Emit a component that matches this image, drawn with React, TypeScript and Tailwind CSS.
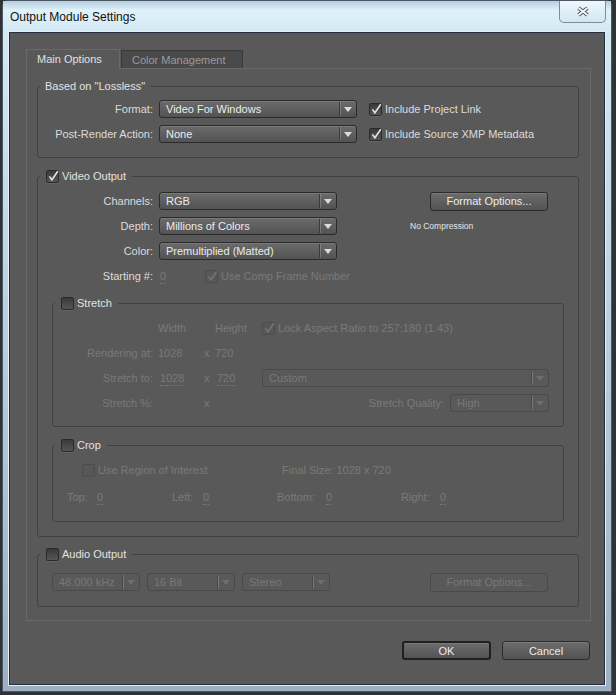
import React from 'react';

// shared bits of the dark dialog
const LABEL = 'text-[#dcdcdc]';
const DIM = 'text-[#7a7a7a]';

function Check({ checked = false, disabled = false, className = '' }: { checked?: boolean; disabled?: boolean; className?: string }) {
  return (
    <span
      className={`relative inline-block w-[13px] h-[13px] shrink-0 rounded-[2px] border ${
        disabled
          ? 'border-[#4c4c4c] bg-[#575757]'
          : 'border-[#2a2a2a] bg-linear-to-b from-[#3a3a3a] to-[#565656] shadow-[0_1px_0_rgba(255,255,255,0.08)]'
      } ${className}`}
    >
      {checked && (
        <svg className="absolute -top-[1px] left-[0px]" width="13" height="13" viewBox="0 0 13 13">
          <path d="M2.4 6.4 L4.9 9.8 L10.8 1.2" fill="none" stroke={disabled ? '#747474' : '#e2e2e2'} strokeWidth="1.6" />
        </svg>
      )}
    </span>
  );
}

function Select({ value, disabled = false, className = '' }: { value: string; disabled?: boolean; className?: string }) {
  return (
    <div
      className={`flex items-center h-[18px] shrink-0 rounded-[3px] border ${
        disabled
          ? 'border-[#494949] text-[#787878]'
          : 'border-[#2b2b2b] bg-linear-to-b from-[#6b6b6b] to-[#535353] text-[#ececec] shadow-[inset_0_1px_0_rgba(255,255,255,0.1)]'
      } ${className}`}
    >
      <span className="flex-1 pl-[6px] truncate leading-[16px]">{value}</span>
      <span className={`w-px h-[14px] ${disabled ? 'bg-[#494949]' : 'bg-[#3a3a3a]'} shadow-[1px_0_0_rgba(255,255,255,0.18)]`} />
      <span className="w-[16px] flex items-center justify-center">
        <svg width="8" height="5" viewBox="0 0 8 5">
          <path d="M0 0 H8 L4 5 Z" fill={disabled ? '#6e6e6e' : '#dcdcdc'} />
        </svg>
      </span>
    </div>
  );
}

function Btn({ label, disabled = false, isDefault = false, className = '' }: { label: string; disabled?: boolean; isDefault?: boolean; className?: string }) {
  return (
    <div
      className={`flex items-center justify-center h-[19px] shrink-0 rounded-[3px] ${
        disabled
          ? 'border border-[#494949] text-[#787878]'
          : `${isDefault ? 'border-2 border-[#1f1f1f]' : 'border border-[#2b2b2b]'} bg-linear-to-b from-[#6c6c6c] to-[#535353] text-[#ececec] shadow-[inset_0_1px_0_rgba(255,255,255,0.1)]`
      } ${className}`}
    >
      {label}
    </div>
  );
}

// editable number shown as dotted-underlined text
function Num({ v }: { v: string }) {
  return <span className={`${DIM} border-b border-dotted border-[#7a7a7a]`}>{v}</span>;
}

export default function App() {
  return (
    <div className="w-[616px] h-[695px] bg-[#303336] pl-[2px] overflow-hidden font-['Liberation_Sans',Arial,sans-serif] text-[11px] leading-[14px] select-none">
      {/* Window frame */}
      <div className="flex flex-col w-[610px] h-[692px] rounded-t-[6px] border border-[#4b5864] bg-linear-to-b from-[#d6ebf6] to-[#9cb0c1]">
        {/* Title bar */}
        <div className="flex items-start justify-between h-[31px] bg-linear-to-b from-[#b4cde0] via-[#e0f2fa] via-30% to-[#d3e9f4]">
          <span className="pl-[7px] self-center text-[12px] text-[#111]">Output Module Settings</span>
          <div className="mr-[5px] w-[47px] h-[22px] rounded-b-[5px] border border-t-0 border-[#7b8c9a] bg-linear-to-b from-[#eef8fc] to-[#d3e7f2] flex items-center justify-center">
            <svg width="14" height="11" viewBox="0 0 14 11">
              <path d="M2.5 2 L11.5 9 M11.5 2 L2.5 9" stroke="#50565c" strokeWidth="3.8" />
              <path d="M2.5 2 L11.5 9 M11.5 2 L2.5 9" stroke="#f6f8fa" strokeWidth="1.8" />
            </svg>
          </div>
        </div>

        {/* Client area */}
        <div className="mx-[6px] mb-[6px] flex-1 flex flex-col border border-[#25303a] bg-[#595959] shadow-[0_0_0_1px_#e2eef6]">
          {/* Tabs */}
          <div className="flex items-end ml-[16px] mt-[16px] h-[20px] -mb-px relative z-10">
            <div className="w-[94px] h-[20px] border border-b-0 border-[#6a6a6a] bg-[#595959] pl-[10px] leading-[19px] text-[#e0e0e0]">
              Main Options
            </div>
            <div className="ml-[1px] w-[122px] h-[19px] border border-[#3a3a3a] border-b-[#6a6a6a] bg-[#4a4a4a] pl-[10px] leading-[18px] text-[#9a9a9a]">
              Color Management
            </div>
          </div>

          {/* Tab panel */}
          <div className="ml-[16px] w-[565px] border border-[#6a6a6a] pl-[10px] pr-[11px] pt-[10px] pb-[13px]">
            {/* Based on "Lossless" */}
            <fieldset className="border border-[#424242] rounded-[3px] pt-[7px] pb-[14px] min-w-0">
              <legend className="ml-[2px] px-[5px] h-[14px] leading-[14px] text-[#e2e2e2]">Based on "Lossless"</legend>
              <div className="flex flex-col gap-[7px]">
                <div className="flex items-center h-[18px]">
                  <span className={`w-[115px] text-right ${LABEL}`}>Format:</span>
                  <Select value="Video For Windows" className="ml-[6px] w-[198px]" />
                  <Check checked className="ml-[12px]" />
                  <span className={`ml-[3px] ${LABEL}`}>Include Project Link</span>
                </div>
                <div className="flex items-center h-[18px]">
                  <span className={`w-[115px] text-right ${LABEL}`}>Post-Render Action:</span>
                  <Select value="None" className="ml-[6px] w-[198px]" />
                  <Check checked className="ml-[12px]" />
                  <span className={`ml-[3px] ${LABEL}`}>Include Source XMP Metadata</span>
                </div>
              </div>
            </fieldset>

            {/* Video Output */}
            <fieldset className="mt-[11px] border border-[#424242] rounded-[3px] pt-[9px] pb-[14px] min-w-0">
              <legend className="ml-[2px] px-[6px] h-[14px]">
                <span className="flex items-center gap-[3px] h-[14px] leading-[14px] text-[#e2e2e2]">
                  <Check checked />
                  Video Output
                </span>
              </legend>
              <div className="flex flex-col gap-[7px]">
                <div className="flex items-center h-[18px]">
                  <span className={`w-[115px] text-right ${LABEL}`}>Channels:</span>
                  <Select value="RGB" className="ml-[6px] w-[178px]" />
                  <Btn label="Format Options..." className="ml-[93px] w-[118px]" />
                </div>
                <div className="flex items-center h-[18px]">
                  <span className={`w-[115px] text-right ${LABEL}`}>Depth:</span>
                  <Select value="Millions of Colors" className="ml-[6px] w-[178px]" />
                  <span className="ml-[73px] text-[8.5px] text-[#e6e6e6]">No Compression</span>
                </div>
                <div className="flex items-center h-[18px]">
                  <span className={`w-[115px] text-right ${LABEL}`}>Color:</span>
                  <Select value="Premultiplied (Matted)" className="ml-[6px] w-[178px]" />
                </div>
                <div className="flex items-center h-[18px]">
                  <span className={`w-[115px] text-right ${LABEL}`}>Starting #:</span>
                  <span className="ml-[7px] w-[10px] flex">
                    <Num v="0" />
                  </span>
                  <Check checked disabled className="ml-[35px]" />
                  <span className={`ml-[3px] ${DIM}`}>Use Comp Frame Number</span>
                </div>
              </div>

              {/* Stretch */}
              <fieldset className="mt-[11px] mx-[14px] border border-[#424242] rounded-[3px] pt-[9px] pb-[14px] min-w-0">
                <legend className="ml-[2px] px-[6px] h-[14px]">
                  <span className="flex items-center gap-[3px] h-[14px] leading-[14px] text-[#e2e2e2]">
                    <Check />
                    Stretch
                  </span>
                </legend>
                <div className={`flex flex-col gap-[7px] ${DIM}`}>
                  <div className="flex items-center h-[18px]">
                    <span className="w-[105px]" />
                    <span className="w-[57px]">Width</span>
                    <span className="w-[47px]">Height</span>
                    <Check checked disabled />
                    <span className="ml-[3px]">Lock Aspect Ratio to 257:180 (1.43)</span>
                  </div>
                  <div className="flex items-center h-[18px]">
                    <span className="w-[100px] text-right">Rendering at:</span>
                    <span className="ml-[5px] w-[46px]">1028</span>
                    <span className="w-[11px]">x</span>
                    <span className="w-[47px]">720</span>
                  </div>
                  <div className="flex items-center h-[18px]">
                    <span className="w-[100px] text-right">Stretch to:</span>
                    <span className="ml-[7px] w-[44px] flex">
                      <Num v="1028" />
                    </span>
                    <span className="w-[13px]">x</span>
                    <span className="w-[45px] flex">
                      <Num v="720" />
                    </span>
                    <Select value="Custom" disabled className="w-[287px]" />
                  </div>
                  <div className="flex items-center h-[18px]">
                    <span className="w-[100px] text-right">Stretch %:</span>
                    <span className="ml-[5px] w-[46px]" />
                    <span className="w-[11px]">x</span>
                    <span className="w-[47px]" />
                    <span className="w-[182px] text-right">Stretch Quality:</span>
                    <Select value="High" disabled className="ml-[6px] w-[99px]" />
                  </div>
                </div>
              </fieldset>

              {/* Crop */}
              <fieldset className="mt-[11px] mx-[14px] border border-[#424242] rounded-[3px] pt-[9px] pb-[15px] min-w-0">
                <legend className="ml-[2px] px-[6px] h-[14px]">
                  <span className="flex items-center gap-[3px] h-[14px] leading-[14px] text-[#e2e2e2]">
                    <Check />
                    Crop
                  </span>
                </legend>
                <div className={`flex flex-col gap-[9px] ${DIM}`}>
                  <div className="flex items-center h-[18px]">
                    <span className="ml-[29px] w-[200px] flex items-center gap-[3px]">
                      <Check disabled />
                      Use Region of Interest
                    </span>
                    <span>Final Size: 1028 x 720</span>
                  </div>
                  <div className="flex items-center h-[18px] pl-[14px]">
                    <span className="w-[105px] flex">
                      <span className="w-[30px]">Top:</span>
                      <Num v="0" />
                    </span>
                    <span className="w-[105px] flex">
                      <span className="w-[31px]">Left:</span>
                      <Num v="0" />
                    </span>
                    <span className="w-[124px] flex">
                      <span className="w-[49px]">Bottom:</span>
                      <Num v="0" />
                    </span>
                    <span className="flex">
                      <span className="w-[39px]">Right:</span>
                      <Num v="0" />
                    </span>
                  </div>
                </div>
              </fieldset>
            </fieldset>

            {/* Audio Output */}
            <fieldset className="mt-[10px] border border-[#424242] rounded-[3px] pt-[12px] pb-[15px] min-w-0">
              <legend className="ml-[2px] px-[6px] h-[14px]">
                <span className="flex items-center gap-[3px] h-[14px] leading-[14px] text-[#e2e2e2]">
                  <Check />
                  Audio Output
                </span>
              </legend>
              <div className="flex items-center h-[18px] pl-[14px]">
                <Select value="48.000 kHz" disabled className="w-[88px]" />
                <Select value="16 Bit" disabled className="ml-[7px] w-[88px]" />
                <Select value="Stereo" disabled className="ml-[7px] w-[88px]" />
                <Btn label="Format Options..." disabled className="ml-[100px] w-[118px]" />
              </div>
            </fieldset>
          </div>

          {/* Dialog buttons */}
          <div className="flex justify-end gap-[11px] mt-[20px] mr-[14px]">
            <Btn label="OK" isDefault className="w-[89px]" />
            <Btn label="Cancel" className="w-[88px]" />
          </div>
        </div>
      </div>
    </div>
  );
}
